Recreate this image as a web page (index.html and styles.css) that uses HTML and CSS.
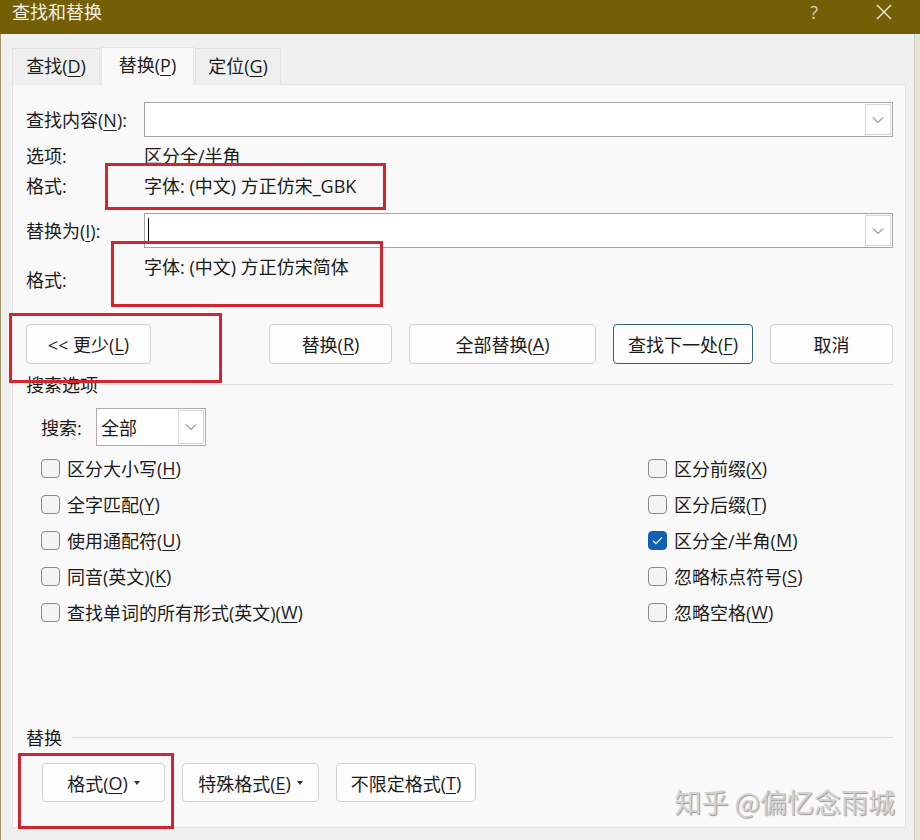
FILE: index.html
```html
<!DOCTYPE html>
<html lang="zh-CN">
<head>
<meta charset="utf-8">
<title>查找和替换</title>
<link rel="stylesheet" href="styles.css">
</head>
<body>
<div class="window">
  <div class="titlebar">
    <span class="title">查找和替换</span>
    <div class="tb-actions">
      <span class="help">?</span>
      <svg class="close" width="16" height="16" viewBox="0 0 16 16"><path d="M1 1 L15 15 M15 1 L1 15" stroke="#f2eee0" stroke-width="1.3" fill="none"/></svg>
    </div>
  </div>
  <div class="client">
    <div class="tabs">
      <div class="tab t1">查找(<u>D</u>)</div>
      <div class="tab t2 active">替换(<u>P</u>)</div>
      <div class="tab t3">定位(<u>G</u>)</div>
    </div>
    <div class="panel">
      <div class="field-row">
        <span class="lbl">查找内容(<u>N</u>):</span>
        <div class="combo">
          <span class="drop"><svg width="12" height="8" viewBox="0 0 12 8"><path d="M1 1.5 L6 6.5 L11 1.5" stroke="#555" stroke-width="1" fill="none"/></svg></span>
        </div>
      </div>
      <div class="info-row first"><span class="lbl">选项:</span><span>区分全/半角</span></div>
      <div class="info-row"><span class="lbl">格式:</span><span>字体: (中文) 方正仿宋_GBK</span></div>
      <div class="field-row replace-row">
        <span class="lbl">替换为(<u>I</u>):</span>
        <div class="combo">
          <span class="caret"></span>
          <span class="drop"><svg width="12" height="8" viewBox="0 0 12 8"><path d="M1 1.5 L6 6.5 L11 1.5" stroke="#555" stroke-width="1" fill="none"/></svg></span>
        </div>
      </div>
      <div class="info-row fmt2"><span class="lbl">格式:</span><span class="val">字体: (中文) 方正仿宋简体</span></div>

      <div class="btn-row">
        <button class="btn w125">&lt;&lt; 更少(<u>L</u>)</button>
        <div class="btn-group">
          <button class="btn w123">替换(<u>R</u>)</button>
          <button class="btn w187">全部替换(<u>A</u>)</button>
          <button class="btn w140 default">查找下一处(<u>F</u>)</button>
          <button class="btn w123">取消</button>
        </div>
      </div>

      <div class="legend"><span>搜索选项</span></div>

      <div class="search-row">
        <span class="search-lbl">搜索:</span>
        <div class="select">
          <span class="select-val">全部</span>
          <span class="sdrop"><svg width="12" height="8" viewBox="0 0 12 8"><path d="M1 1.5 L6 6.5 L11 1.5" stroke="#555" stroke-width="1" fill="none"/></svg></span>
        </div>
      </div>

      <div class="checks">
        <div class="check"><span class="box"></span>区分大小写(<u>H</u>)</div>
        <div class="check"><span class="box"></span>区分前缀(<u>X</u>)</div>
        <div class="check"><span class="box"></span>全字匹配(<u>Y</u>)</div>
        <div class="check"><span class="box"></span>区分后缀(<u>T</u>)</div>
        <div class="check"><span class="box"></span>使用通配符(<u>U</u>)</div>
        <div class="check"><span class="box checked"><svg width="19" height="19" viewBox="0 0 19 19"><path d="M5 9.8 L8 12.6 L14 6.4" stroke="#fff" stroke-width="1.2" fill="none"/></svg></span>区分全/半角(<u>M</u>)</div>
        <div class="check"><span class="box"></span>同音(英文)(<u>K</u>)</div>
        <div class="check"><span class="box"></span>忽略标点符号(<u>S</u>)</div>
        <div class="check"><span class="box"></span>查找单词的所有形式(英文)(<u>W</u>)</div>
        <div class="check"><span class="box"></span>忽略空格(<u>W</u>)</div>
      </div>

      <div class="legend replace-legend"><span>替换</span></div>

      <div class="bottom-btns">
        <button class="btn b1">格式(<u>O</u>)<span class="tri"></span></button>
        <button class="btn b2">特殊格式(<u>E</u>)<span class="tri"></span></button>
        <button class="btn b3">不限定格式(<u>T</u>)</button>
      </div>

      <div class="watermark">知乎 @偏忆念雨城</div>
    </div>
  </div>

  <div class="mark m1"></div>
  <div class="mark m2"></div>
  <div class="mark m3"></div>
  <div class="mark m4"></div>
</div>
</body>
</html>
```
FILE: styles.css
```css
* { box-sizing: border-box; }
html, body { margin: 0; padding: 0; }
body {
  width: 920px;
  height: 840px;
  overflow: hidden;
  background: #e9e4d0;
  font-family: "Open Sans", "Noto Sans CJK SC", sans-serif;
  font-size: 18px;
  color: #1b1b1b;
}
u { text-decoration: underline; text-decoration-thickness: 1px; text-underline-offset: 3px; }

.window { position: relative; width: 920px; height: 840px; }

.titlebar {
  height: 34px;
  background: #735f05;
  display: flex;
  justify-content: space-between;
  align-items: flex-start;
  padding: 0 0 0 12px;
}
.title {
  color: #f3efe2;
  font-size: 18px;
  line-height: 24px;
}
.tb-actions { display: flex; align-items: flex-start; }
.help {
  color: #d9d2b6;
  font-size: 18px;
  line-height: 24px;
  margin-right: 58px;
}
.close { margin-top: 4px; margin-right: 28px; }

.client {
  width: 915px;
  height: 806px;
  background: #f0f0f0;
  border-left: 1px solid #a49866;
  border-right: 1px solid #cfcfcf;
  padding: 13px 0 0 11px;
}

.tabs { display: flex; align-items: flex-end; height: 38px; position: relative; z-index: 1; margin-bottom: -1px; }
.tab {
  height: 37px;
  line-height: 35px;
  white-space: nowrap;
  text-align: center;
  padding: 0;
  background: #efefef;
  border: 1px solid #e2e2e2;
  border-bottom: none;
  margin-right: 1px;
}
.t1 { width: 88px; }
.t2 { width: 93px; }
.t3 { width: 86px; }
.tab.active {
  height: 38px;
  background: #f9f9f9;
  border-color: #e4e4e4;
}

.panel {
  position: relative;
  width: 894px;
  background: #f9f9f9;
  border: 1px solid #e3e3e3;
  padding: 17px 12px 25px 13px;
}

.field-row {
  display: grid;
  grid-template-columns: 118px 1fr;
  align-items: center;
}
.replace-row { margin-top: 12px; }
.lbl { line-height: 30px; white-space: nowrap; }
.combo {
  position: relative;
  height: 35px;
  background: #fff;
  border: 1px solid #a4a4a4;
  display: flex;
  justify-content: flex-end;
  align-items: center;
  padding-right: 1px;
}
.drop {
  width: 26px;
  height: 31px;
  border: 1px solid #d6d6d6;
  display: flex;
  align-items: center;
  justify-content: center;
}
.caret {
  position: absolute;
  left: 3px;
  top: 4px;
  width: 1px;
  height: 23px;
  background: #000;
}

.info-row {
  display: grid;
  grid-template-columns: 118px 1fr;
  line-height: 30px;
}
.info-row.first { margin-top: 4px; }
.fmt2 { margin-top: 4px; height: 43px; }
.fmt2 .lbl { padding-top: 13px; }
.fmt2 .val { line-height: 30px; }

.btn {
  font-family: inherit;
  font-size: 18px;
  color: #1b1b1b;
  background: #fdfdfd;
  border: 1px solid #d2d2d2;
  border-radius: 4px;
  height: 40px;
  padding: 0;
  white-space: nowrap;
  display: inline-flex;
  align-items: center;
  justify-content: center;
}
.btn-row {
  margin-top: 29px;
  display: flex;
  justify-content: space-between;
}
.btn-group { display: flex; gap: 17px; }
.w125 { width: 125px; }
.w123 { width: 123px; }
.w187 { width: 187px; }
.w140 { width: 140px; }
.default { border-color: #2d6479; }

.legend {
  margin-top: 10px;
  height: 22px;
  display: flex;
  align-items: center;
  line-height: 22px;
}
.legend::after {
  content: "";
  flex: 1;
  height: 1px;
  background: #dedede;
  margin-left: 2px;
  margin-top: -2px;
}
.replace-legend { margin-top: 97px; }
.replace-legend::after { margin-left: 10px; }

.search-row {
  margin-top: 12px;
  padding-left: 15px;
  display: flex;
  align-items: center;
}
.search-lbl { width: 55px; }
.select {
  width: 110px;
  height: 38px;
  border: 1px solid #acacac;
  background: #fff;
  display: flex;
  align-items: center;
  justify-content: space-between;
  padding: 0 1px 0 4px;
}
.sdrop {
  width: 26px;
  height: 34px;
  border: 1px solid #d6d6d6;
  display: flex;
  align-items: center;
  justify-content: center;
}

.checks {
  margin-top: 4px;
  padding-left: 15px;
  display: grid;
  grid-template-columns: 607px 1fr;
  grid-auto-rows: 36px;
}
.check { display: flex; align-items: center; white-space: nowrap; }
.box {
  width: 19px;
  height: 19px;
  border: 1px solid #8a8a8a;
  border-radius: 4px;
  background: #f4f4f4;
  margin-right: 7px;
  display: inline-block;
  flex: none;
}
.box.checked {
  background: #0f5fb5;
  border-color: #0f5fb5;
  position: relative;
}
.box.checked svg { position: absolute; left: -1px; top: -1px; }

.bottom-btns {
  margin-top: 14px;
  padding-left: 16px;
  display: flex;
  gap: 17px;
}
.bottom-btns .btn { height: 39px; }
.b1 { width: 123px; }
.b2 { width: 137px; }
.b3 { width: 140px; }
.tri {
  width: 0;
  height: 0;
  border-left: 3.5px solid transparent;
  border-right: 3.5px solid transparent;
  border-top: 4px solid #333;
  margin-left: 6px;
  margin-top: 1px;
}

.watermark {
  position: absolute;
  right: 10px;
  bottom: 8px;
  font-family: "Noto Sans CJK SC", sans-serif;
  font-size: 27px;
  line-height: 34px;
  color: #d2d2d2;
  text-shadow: 1px 1px 1px #9a9a9a;
}

.mark {
  position: absolute;
  border: 3px solid #d1252f;
  pointer-events: none;
}
.m1 { left: 105px; top: 163px; width: 281px; height: 47px; }
.m2 { left: 111px; top: 241px; width: 272px; height: 66px; }
.m3 { left: 9px; top: 313px; width: 213px; height: 70px; }
.m4 { left: 18px; top: 753px; width: 156px; height: 76px; }
```
